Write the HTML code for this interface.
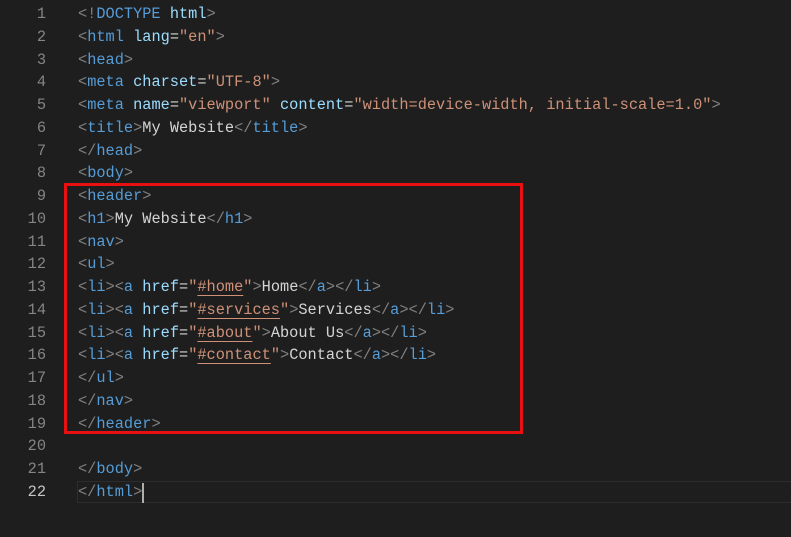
<!DOCTYPE html>
<html><head><style>
body{margin:0;width:791px;height:537px;background:#1e1e1e;overflow:hidden;position:relative;font-family:"Liberation Mono",monospace;font-size:15.3px}
.l{position:absolute;left:0;height:22.76px;line-height:22.76px;white-space:pre;width:791px}
.n{position:absolute;left:0;width:46px;text-align:right;color:#858585}
.c{position:absolute;left:78px;color:#d4d4d4}
.p{color:#808080}.t{color:#569cd6}.a{color:#9cdcfe}.s{color:#ce9178}
.u{text-decoration:underline;text-decoration-color:#ce9178;text-underline-offset:4px}
#box{position:absolute;left:64px;top:183px;width:453px;height:245px;border:3px solid #e81010}
#cur{position:absolute;left:77px;top:481px;width:720px;height:22px;border:1px solid #2c2c2c;box-sizing:border-box}
#caret{position:absolute;left:142px;top:483px;width:2px;height:20px;background:#aeafad}
</style></head><body>
<div id="cur"></div>
<div class="l" style="top:3px"><span class="n">1</span><span class="c"><span class="p">&lt;!</span><span class="t">DOCTYPE</span> <span class="a">html</span><span class="p">&gt;</span></span></div>
<div class="l" style="top:25.76px"><span class="n">2</span><span class="c"><span class="p">&lt;</span><span class="t">html</span> <span class="a">lang</span>=<span class="s">"en"</span><span class="p">&gt;</span></span></div>
<div class="l" style="top:48.52px"><span class="n">3</span><span class="c"><span class="p">&lt;</span><span class="t">head</span><span class="p">&gt;</span></span></div>
<div class="l" style="top:71.28px"><span class="n">4</span><span class="c"><span class="p">&lt;</span><span class="t">meta</span> <span class="a">charset</span>=<span class="s">"UTF-8"</span><span class="p">&gt;</span></span></div>
<div class="l" style="top:94.04px"><span class="n">5</span><span class="c"><span class="p">&lt;</span><span class="t">meta</span> <span class="a">name</span>=<span class="s">"viewport"</span> <span class="a">content</span>=<span class="s">"width=device-width, initial-scale=1.0"</span><span class="p">&gt;</span></span></div>
<div class="l" style="top:116.8px"><span class="n">6</span><span class="c"><span class="p">&lt;</span><span class="t">title</span><span class="p">&gt;</span>My Website<span class="p">&lt;/</span><span class="t">title</span><span class="p">&gt;</span></span></div>
<div class="l" style="top:139.56px"><span class="n">7</span><span class="c"><span class="p">&lt;/</span><span class="t">head</span><span class="p">&gt;</span></span></div>
<div class="l" style="top:162.32px"><span class="n">8</span><span class="c"><span class="p">&lt;</span><span class="t">body</span><span class="p">&gt;</span></span></div>
<div class="l" style="top:185.08px"><span class="n">9</span><span class="c"><span class="p">&lt;</span><span class="t">header</span><span class="p">&gt;</span></span></div>
<div class="l" style="top:207.84px"><span class="n">10</span><span class="c"><span class="p">&lt;</span><span class="t">h1</span><span class="p">&gt;</span>My Website<span class="p">&lt;/</span><span class="t">h1</span><span class="p">&gt;</span></span></div>
<div class="l" style="top:230.6px"><span class="n">11</span><span class="c"><span class="p">&lt;</span><span class="t">nav</span><span class="p">&gt;</span></span></div>
<div class="l" style="top:253.36px"><span class="n">12</span><span class="c"><span class="p">&lt;</span><span class="t">ul</span><span class="p">&gt;</span></span></div>
<div class="l" style="top:276.12px"><span class="n">13</span><span class="c"><span class="p">&lt;</span><span class="t">li</span><span class="p">&gt;&lt;</span><span class="t">a</span> <span class="a">href</span>=<span class="s">"<span class="u">#home</span>"</span><span class="p">&gt;</span>Home<span class="p">&lt;/</span><span class="t">a</span><span class="p">&gt;&lt;/</span><span class="t">li</span><span class="p">&gt;</span></span></div>
<div class="l" style="top:298.88px"><span class="n">14</span><span class="c"><span class="p">&lt;</span><span class="t">li</span><span class="p">&gt;&lt;</span><span class="t">a</span> <span class="a">href</span>=<span class="s">"<span class="u">#services</span>"</span><span class="p">&gt;</span>Services<span class="p">&lt;/</span><span class="t">a</span><span class="p">&gt;&lt;/</span><span class="t">li</span><span class="p">&gt;</span></span></div>
<div class="l" style="top:321.64px"><span class="n">15</span><span class="c"><span class="p">&lt;</span><span class="t">li</span><span class="p">&gt;&lt;</span><span class="t">a</span> <span class="a">href</span>=<span class="s">"<span class="u">#about</span>"</span><span class="p">&gt;</span>About Us<span class="p">&lt;/</span><span class="t">a</span><span class="p">&gt;&lt;/</span><span class="t">li</span><span class="p">&gt;</span></span></div>
<div class="l" style="top:344.4px"><span class="n">16</span><span class="c"><span class="p">&lt;</span><span class="t">li</span><span class="p">&gt;&lt;</span><span class="t">a</span> <span class="a">href</span>=<span class="s">"<span class="u">#contact</span>"</span><span class="p">&gt;</span>Contact<span class="p">&lt;/</span><span class="t">a</span><span class="p">&gt;&lt;/</span><span class="t">li</span><span class="p">&gt;</span></span></div>
<div class="l" style="top:367.16px"><span class="n">17</span><span class="c"><span class="p">&lt;/</span><span class="t">ul</span><span class="p">&gt;</span></span></div>
<div class="l" style="top:389.92px"><span class="n">18</span><span class="c"><span class="p">&lt;/</span><span class="t">nav</span><span class="p">&gt;</span></span></div>
<div class="l" style="top:412.68px"><span class="n">19</span><span class="c"><span class="p">&lt;/</span><span class="t">header</span><span class="p">&gt;</span></span></div>
<div class="l" style="top:435.44px"><span class="n">20</span></div>
<div class="l" style="top:458.2px"><span class="n">21</span><span class="c"><span class="p">&lt;/</span><span class="t">body</span><span class="p">&gt;</span></span></div>
<div class="l" style="top:480.96px"><span class="n" style="color:#c6c6c6">22</span><span class="c"><span class="p">&lt;/</span><span class="t">html</span><span class="p">&gt;</span></span></div>
<div id="caret"></div>
<div id="box"></div>
</body></html>
